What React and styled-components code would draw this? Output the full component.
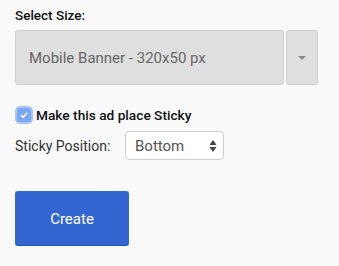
import styled, { createGlobalStyle } from 'styled-components'

const Global = createGlobalStyle`
body {
  margin: 0;
  background: #f9f9f9;
  font-family: Roboto, "Liberation Sans", sans-serif;
}
`

const Form = styled.div`
padding: 8px 15px 0 15px;
display: flex;
flex-direction: column;
`
const Label = styled.div`
font-size: 13.5px;
font-weight: 500;
color: #111;
line-height: 15px;
margin-bottom: 7px;
`
const SizeRow = styled.div`
display: flex;
gap: 2px;
height: 55px;
`
const SizeBox = styled.div`
width: 269px;
box-sizing: border-box;
background: #dfdfdf;
border: 1px solid #cfcfcf;
border-radius: 3px;
display: flex;
align-items: center;
padding-left: 13px;
font-size: 15px;
color: #666;
`
const ArrowBox = styled.div`
width: 32px;
box-sizing: border-box;
background: #dfdfdf;
border: 1px solid #cfcfcf;
border-radius: 3px;
display: flex;
align-items: center;
justify-content: center;
`
const Caret = styled.div`
width: 0;
height: 0;
border-left: 4px solid transparent;
border-right: 4px solid transparent;
border-top: 4px solid #888;
`
const CheckRow = styled.label`
display: flex;
align-items: center;
gap: 5px;
margin-top: 22px;
font-size: 13.7px;
font-weight: 500;
color: #111;
`
const Check = styled.span`
width: 14px;
height: 14px;
border-radius: 3px;
background: #7aa7f5;
box-shadow: 0 0 0 2px #a9c5f8;
margin-left: 2px;
display: flex;
align-items: center;
justify-content: center;
`
const PosRow = styled.div`
display: flex;
align-items: center;
margin-top: 8px;
font-size: 14px;
color: #333;
`
const PosLabel = styled.span`
width: 110px;
`
const PosSelect = styled.div`
width: 99px;
height: 29px;
box-sizing: border-box;
background: #fff;
border: 1px solid #cfcfcf;
border-radius: 4px;
display: flex;
align-items: center;
justify-content: space-between;
padding: 0 6px 0 9px;
font-size: 15px;
color: #555;
`
const Button = styled.button`
margin-top: 31px;
width: 114px;
height: 55px;
padding-top: 2px;
background: #3366d0;
border: none;
border-bottom: 1px solid #2a55b0;
border-radius: 3px;
color: #fff;
font-family: Roboto, "Liberation Sans", sans-serif;
font-size: 15px;
`

const App = () => {
  return (
    <>
      <Global />
      <Form>
        <Label>Select Size:</Label>
        <SizeRow>
          <SizeBox>Mobile Banner - 320x50 px</SizeBox>
          <ArrowBox><Caret /></ArrowBox>
        </SizeRow>
        <CheckRow>
          <Check>
            <svg width="10" height="10" viewBox="0 0 10 10">
              <path d="M2 5.2 L4.2 7.3 L8 2.8" fill="none" stroke="#fff" strokeWidth="1.6" />
            </svg>
          </Check>
          Make this ad place Sticky
        </CheckRow>
        <PosRow>
          <PosLabel>Sticky Position:</PosLabel>
          <PosSelect>
            Bottom
            <svg width="8" height="14" viewBox="0 0 8 14">
              <path d="M4 1 L7.5 6 L0.5 6 Z M4 13 L7.5 8 L0.5 8 Z" fill="#444" />
            </svg>
          </PosSelect>
        </PosRow>
        <Button>Create</Button>
      </Form>
    </>
  )
}
export default App
